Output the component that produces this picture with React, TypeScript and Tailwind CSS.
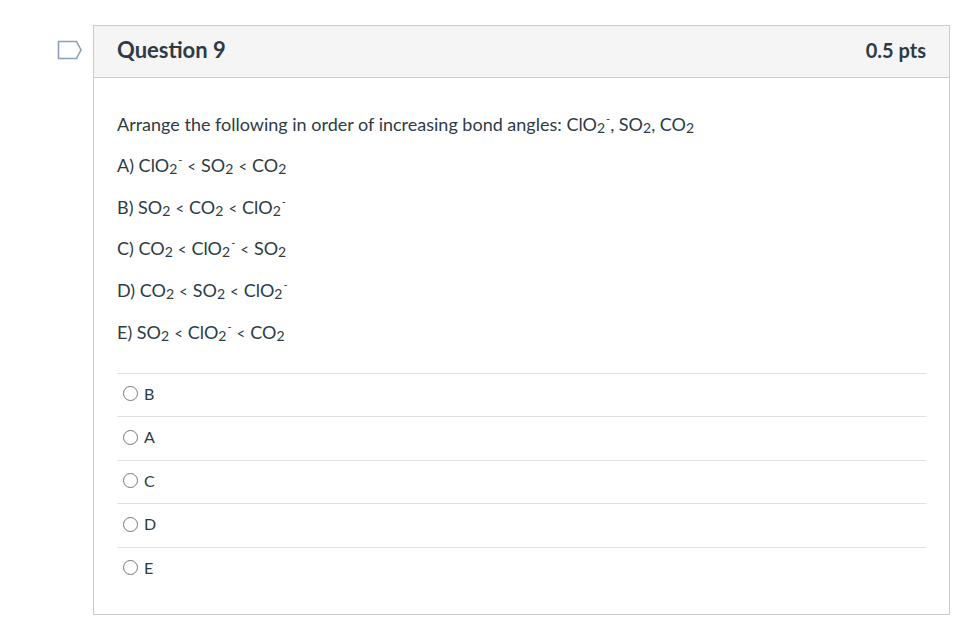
import React from 'react';

const Sub = ({ children }: { children: React.ReactNode }) => (
  <sub className="text-[14px] leading-none relative top-[2px] align-baseline">{children}</sub>
);

const Minus = () => (
  <sup className="text-[11px] leading-none relative -top-[8px] align-baseline ml-[1px]">-</sup>
);

const ClO2 = () => (
  <span>
    ClO<Sub>2</Sub>
    <Minus />
  </span>
);
const SO2 = () => (
  <span>
    SO<Sub>2</Sub>
  </span>
);
const CO2 = () => (
  <span>
    CO<Sub>2</Sub>
  </span>
);

const Lt = () => <span className="mx-[5px] text-[15px]">&lt;</span>;

const App = () => {
  const choices = ['B', 'A', 'C', 'D', 'E'];

  return (
    <div
      className="min-h-screen bg-white text-[#2d3b45] pt-[25px] flex"
      style={{ fontFamily: 'Lato, "Noto Sans", sans-serif' }}
    >
      {/* Flag icon */}
      <div className="w-[93px] flex justify-end pr-[10px] pt-[15px]">
        <svg width="26" height="20" viewBox="0 0 26 20" fill="none">
          <path d="M1.5 1.5 H19.5 L24 10 L19.5 18.5 H1.5 Z" stroke="#8c9fb5" strokeWidth="1.6" strokeLinejoin="miter" />
        </svg>
      </div>

      {/* Question card */}
      <div className="w-[857px] h-[590px] border border-[#c7cdd1] flex flex-col">
        <div className="h-[52px] bg-[#f5f5f5] border-b border-[#c7cdd1] flex items-center justify-between px-[23px] pb-[4px]">
          <h2 className="text-[22px] font-bold">Question 9</h2>
          <span className="text-[20px] font-bold">0.5 pts</span>
        </div>

        <div className="px-[23px] pt-[34px]">
          <p className="text-[18px] leading-[24px]">
            Arrange the following in order of increasing bond angles: <ClO2 />, <SO2 />, <CO2 />
          </p>
          <div className="mt-[17px] flex flex-col gap-[16.7px] text-[18px] leading-[24px]">
            <p>
              A) <ClO2 />
              <Lt />
              <SO2 />
              <Lt />
              <CO2 />
            </p>
            <p>
              B) <SO2 />
              <Lt />
              <CO2 />
              <Lt />
              <ClO2 />
            </p>
            <p>
              C) <CO2 />
              <Lt />
              <ClO2 />
              <Lt />
              <SO2 />
            </p>
            <p>
              D) <CO2 />
              <Lt />
              <SO2 />
              <Lt />
              <ClO2 />
            </p>
            <p>
              E) <SO2 />
              <Lt />
              <ClO2 />
              <Lt />
              <CO2 />
            </p>
          </div>

          <div className="mt-[28px] flex flex-col">
            {choices.map((c) => (
              <div
                key={c}
                className="h-[43.5px] border-t border-[#e0e0e0] flex items-center pl-[6px] pb-[3px] gap-[6px] text-[16px]"
              >
                <span className="w-[15px] h-[15px] rounded-full border border-[#777] bg-white" />
                <span>{c}</span>
              </div>
            ))}
          </div>
        </div>
      </div>
    </div>
  );
};

export default App;
